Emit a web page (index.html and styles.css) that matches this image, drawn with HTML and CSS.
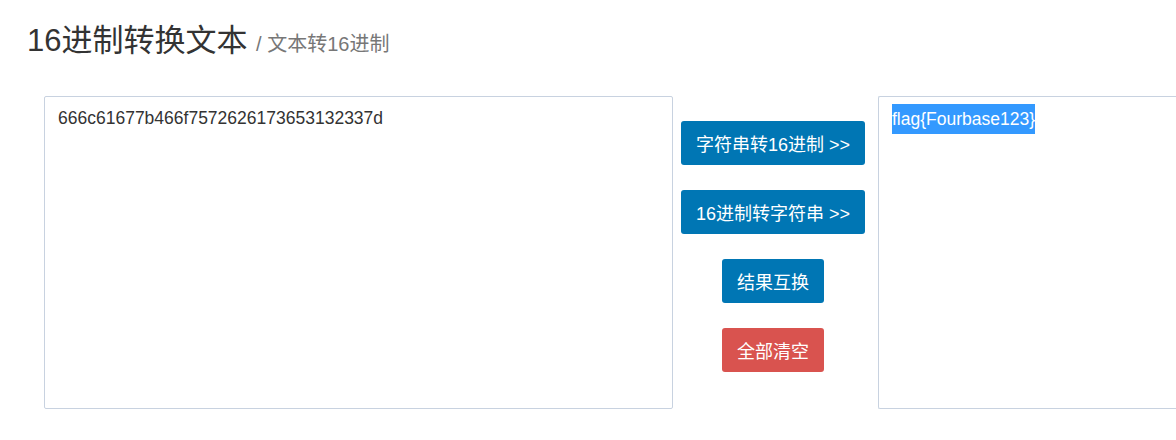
FILE: index.html
```html
<!DOCTYPE html>
<html lang="zh-CN">
<head>
<meta charset="utf-8">
<title>16进制转换文本</title>
<link rel="stylesheet" href="styles.css">
</head>
<body>
<header class="page-header">
  <h1 class="title">16进制转换文本 <small class="subtitle">/ 文本转16进制</small></h1>
</header>
<main class="converter">
  <textarea class="box box-input" spellcheck="false">666c61677b466f7572626173653132337d</textarea>
  <div class="actions">
    <button class="btn btn-primary" type="button">字符串转16进制 &gt;&gt;</button>
    <button class="btn btn-primary" type="button">16进制转字符串 &gt;&gt;</button>
    <button class="btn btn-primary" type="button">结果互换</button>
    <button class="btn btn-danger" type="button">全部清空</button>
  </div>
  <div class="box box-output"><span class="selected">flag{Fourbase123}</span></div>
</main>
</body>
</html>
```
FILE: styles.css
```css
html, body {
  margin: 0;
  padding: 0;
  background: #fff;
  overflow: hidden;
}

body {
  font-family: "Liberation Sans", "Noto Sans CJK SC", sans-serif;
  color: #333;
}

.page-header {
  padding: 24px 0 0 27px;
}

.title {
  margin: 0;
  font-size: 31px;
  font-weight: normal;
  line-height: 34px;
  color: #333;
  white-space: nowrap;
}

.subtitle {
  font-size: 20px;
  color: #777;
}

.converter {
  display: flex;
  align-items: flex-start;
  margin: 35px 0 0 44px;
}

.box {
  box-sizing: border-box;
  flex: none;
  width: 629px;
  height: 313px;
  border: 1px solid #c8d2e0;
  border-radius: 2px;
  padding: 7px 13px;
  font-family: "Liberation Sans", "Noto Sans CJK SC", sans-serif;
  font-size: 17.5px;
  line-height: 29px;
  color: #333;
  background: #fff;
  margin: 0;
}

.box-input {
  resize: none;
  outline: none;
  overflow: hidden;
  display: block;
}

.box-output {
  flex: 1 1 auto;
  width: auto;
  min-width: 0;
  margin-left: 5px;
  border-right: none;
  border-radius: 2px 0 0 2px;
}

.selected {
  background: #3399ff;
  color: #fff;
  padding: 4.5px 0 5.5px;
}

.actions {
  flex: none;
  width: 200px;
  display: flex;
  flex-direction: column;
  align-items: center;
  gap: 25px;
  padding-top: 25px;
}

.btn {
  height: 44px;
  padding: 0 15px;
  border: none;
  border-radius: 3px;
  font-family: "Liberation Sans", "Noto Sans CJK SC", sans-serif;
  font-size: 18px;
  color: #fff;
  cursor: pointer;
  white-space: nowrap;
}

.btn-primary {
  background: #0076b4;
}

.btn-danger {
  background: #d9534f;
}
```
